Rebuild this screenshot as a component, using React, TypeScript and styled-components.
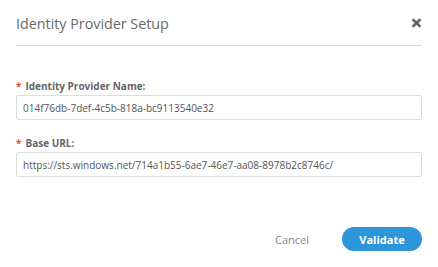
import styled, { createGlobalStyle } from 'styled-components';

const GlobalStyle = createGlobalStyle`
  html, body {
    margin: 0;
    padding: 0;
    background: #ffffff;
  }
  body {
    font-family: 'Open Sans', 'Noto Sans', sans-serif;
  }
`;

const fields = [
  { label: 'Identity Provider Name:', value: '014f76db-7def-4c5b-818a-bc9113540e32' },
  { label: 'Base URL:', value: 'https://sts.windows.net/714a1b55-6ae7-46e7-aa08-8978b2c8746c/' },
];

const App = () => {
  return (
    <>
      <GlobalStyle />
      <Modal>
        <Header>
          <Title>Identity Provider Setup</Title>
          <CloseButton aria-label="Close">
            <svg width="11" height="10" viewBox="0 0 11 10">
              <path d="M1.6 1.3 L9.4 8.7 M9.4 1.3 L1.6 8.7" stroke="#666" strokeWidth="2.6" strokeLinecap="butt" />
            </svg>
          </CloseButton>
        </Header>
        <Form>
          {fields.map((f) => (
            <Field key={f.label}>
              <Label>
                <Required>*</Required>
                {f.label}
              </Label>
              <Input defaultValue={f.value} />
            </Field>
          ))}
        </Form>
        <Footer>
          <CancelButton>Cancel</CancelButton>
          <PrimaryButton>Validate</PrimaryButton>
        </Footer>
      </Modal>
    </>
  );
};

const Modal = styled.div`
  width: 438px;
  height: 267px;
  box-sizing: border-box;
  padding: 0 16px;
  display: flex;
  flex-direction: column;
`;

const Header = styled.div`
  display: flex;
  justify-content: space-between;
  align-items: flex-start;
  padding: 13px 0 10px;
  border-bottom: 1px solid #dcdcdc;
`;

const Title = styled.div`
  font-size: 14.3px;
  line-height: 22px;
  color: #6a6a6a;
`;

const CloseButton = styled.div`
  margin-top: 5px;
  width: 11px;
  height: 10px;
  display: flex;
  cursor: pointer;
`;

const Form = styled.div`
  display: flex;
  flex-direction: column;
  gap: 16px;
  padding-top: 33px;
`;

const Field = styled.div`
  display: flex;
  flex-direction: column;
  gap: 2px;
`;

const Label = styled.label`
  font-size: 10px;
  line-height: 14px;
  font-weight: 700;
  color: #666666;
`;

const Required = styled.span`
  color: #e5533d;
  margin-right: 4px;
`;

const Input = styled.input`
  box-sizing: border-box;
  width: 100%;
  height: 25px;
  margin: 0;
  padding: 0 6px;
  border: 1px solid #dddddd;
  border-radius: 2px;
  font-family: 'Open Sans', 'Noto Sans', sans-serif;
  font-size: 10px;
  color: #555555;
  outline: none;
`;

const Footer = styled.div`
  display: flex;
  justify-content: flex-end;
  align-items: center;
  gap: 33px;
  margin-top: 50px;
`;

const CancelButton = styled.button`
  border: none;
  background: none;
  padding: 0;
  font-family: 'Open Sans', 'Noto Sans', sans-serif;
  font-size: 11px;
  color: #888888;
  cursor: pointer;
`;

const PrimaryButton = styled.button`
  width: 80px;
  height: 24px;
  border: none;
  border-radius: 12px;
  background: #2b96d9;
  color: #ffffff;
  font-family: 'Open Sans', 'Noto Sans', sans-serif;
  font-size: 11px;
  font-weight: 700;
  cursor: pointer;
`;

export default App;
